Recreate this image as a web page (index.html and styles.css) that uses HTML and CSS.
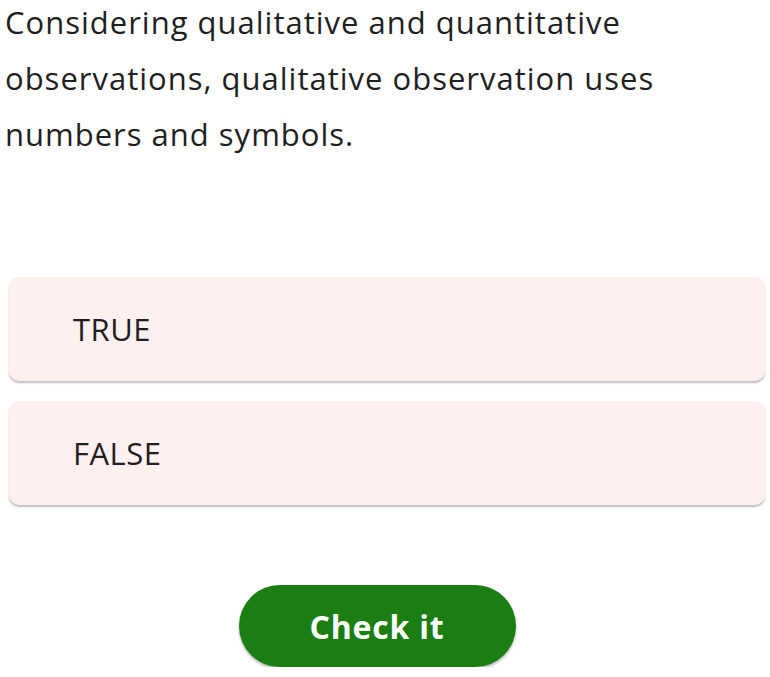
FILE: index.html
```html
<!DOCTYPE html>
<html lang="en">
<head>
    <meta charset="UTF-8">
    <meta name="viewport" content="width=device-width, initial-scale=1.0">
    <title>True or False</title>
    <link rel="stylesheet" href="styles.css">
</head>
<body>
    <div class="question">
        Considering qualitative and quantitative observations, qualitative observation uses numbers and symbols.
    </div>
    <div class="options">
        <div class="option">TRUE</div>
        <div class="option">FALSE</div>
    </div>
    <div class="actions">
        <button class="check-btn">Check it</button>
    </div>
</body>
</html>
```

FILE: styles.css
```css
body {
    font-family: 'Open Sans', 'Lato', sans-serif;
    margin: 0;
    padding: 0;
    background-color: #ffffff;
    color: #1f1f1f;
}
.question {
    font-size: 31px;
    line-height: 56px;
    padding: 0 60px 0 5px;
    margin-top: -6px;
    letter-spacing: 1px;
}
.options {
    display: flex;
    flex-direction: column;
    gap: 20px;
    padding: 0 5px 0 9px;
    margin-top: 115px;
}
.option {
    background-color: #fdf0ee;
    border-radius: 10px;
    height: 104px;
    display: flex;
    align-items: center;
    padding-left: 64px;
    font-size: 31px;
    letter-spacing: 0.5px;
    box-shadow: 0 2px 2px rgba(0, 0, 0, 0.25);
}
.actions {
    display: flex;
    justify-content: center;
    margin-top: 80px;
    padding-right: 16px;
}
.check-btn {
    background-color: #1a7e12;
    color: #ffffff;
    border: none;
    width: 277px;
    height: 82px;
    border-radius: 41px;
    font-family: 'Open Sans', sans-serif;
    font-size: 32px;
    font-weight: bold;
    letter-spacing: 0.8px;
    box-shadow: 0 2px 3px rgba(0, 0, 0, 0.3);
    cursor: pointer;
}
```
